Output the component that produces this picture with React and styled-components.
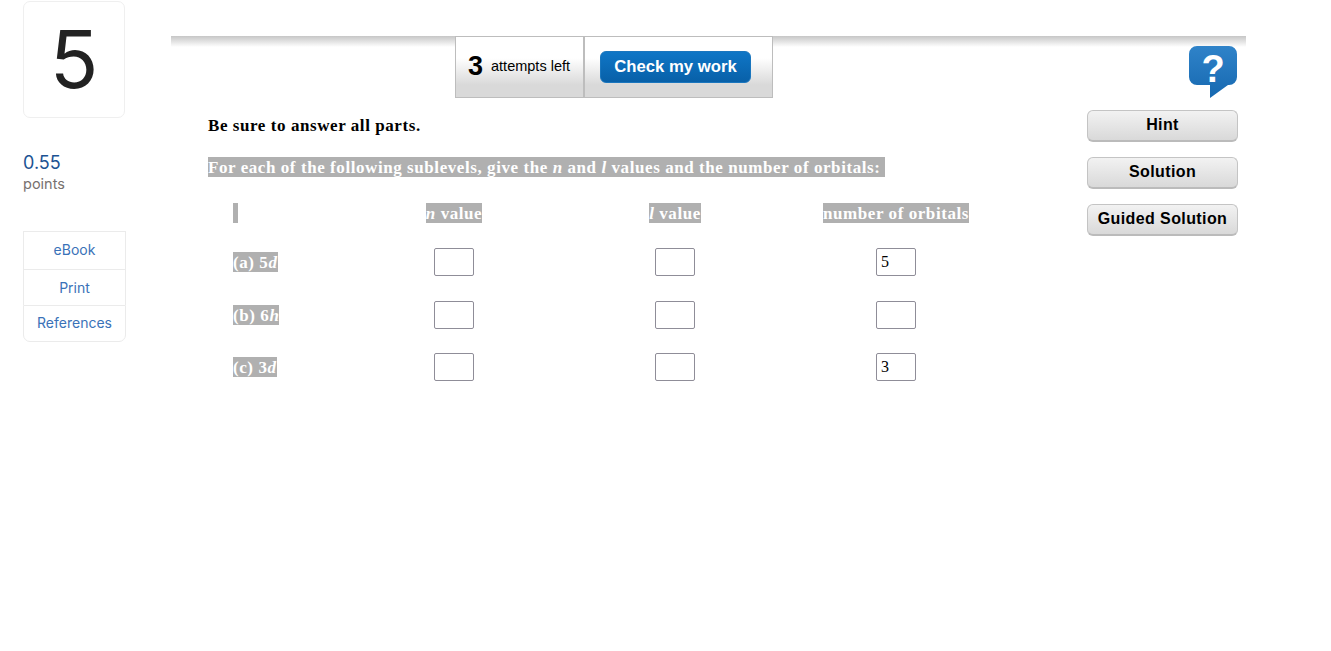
import React from "react";
import styled, { createGlobalStyle } from "styled-components";

const Global = createGlobalStyle`
  html, body { margin: 0; padding: 0; background: #fff; }
  * { box-sizing: border-box; }
`;

const Page = styled.div`
  display: flex;
  align-items: flex-start;
  width: 1331px;
  height: 651px;
  overflow: hidden;
  padding-left: 23px;
`;

const Sidebar = styled.aside`
  width: 103px;
  padding-top: 1px;
  font-family: Inter, "Liberation Sans", sans-serif;
`;

const NumberCard = styled.div`
  width: 102px;
  height: 117px;
  border: 1px solid #efefef;
  border-radius: 7px;
  display: flex;
  align-items: center;
  justify-content: center;
  padding-bottom: 1px;
  font-size: 80px;
  font-weight: 400;
  color: #222;
  line-height: 1;
`;

const Score = styled.div`
  margin-top: 35px;
  font-size: 18px;
  line-height: 20px;
  color: #1c5393;
`;

const ScoreLabel = styled.div`
  font-size: 14.5px;
  line-height: 20px;
  color: #77716f;
  margin-top: 1px;
`;

const Nav = styled.nav`
  margin-top: 37px;
  display: flex;
  flex-direction: column;
`;

const NavItem = styled.a`
  height: ${(p) => p.$h}px;
  padding-bottom: ${(p) => p.$lift || 0}px;
  display: flex;
  align-items: center;
  justify-content: center;
  border: 1px solid #ebebeb;
  border-bottom: ${(p) => (p.$last ? "1px solid #ebebeb" : "none")};
  border-radius: ${(p) => (p.$last ? "0 0 7px 7px" : "0")};
  font-size: 14px;
  color: #3a72b8;
`;

const Main = styled.main`
  width: 1075px;
  margin-left: 45px;
  padding-top: 36px;
`;

const TopBar = styled.header`
  display: flex;
  justify-content: flex-start;
  padding-left: 284px;
  background: linear-gradient(#c6c6c6, #fff) no-repeat top / 100% 11px;
`;

const Attempts = styled.div`
  display: flex;
  height: 62px;
  border: 1px solid #bdbdbd;
  background: linear-gradient(#fff 35%, #d9d9d9 80%);
  font-family: "Liberation Sans", Arial, sans-serif;
`;

const AttemptCell = styled.div`
  width: 129px;
  border-right: 2px solid #bdbdbd;
  display: flex;
  align-items: center;
  padding: 0 0 2px 12px;
  font-size: 14.5px;
  color: #000;
`;

const AttemptCount = styled.b`
  font-size: 27px;
  margin-right: 8px;
`;

const CheckCell = styled.div`
  width: 187px;
  display: flex;
  align-items: center;
  padding-left: 15px;
`;

const CheckButton = styled.button`
  width: 151px;
  height: 32px;
  padding: 0 0 1px;
  border: 1px solid #1a76be;
  border-radius: 6px;
  background: linear-gradient(#0f76c6, #0860a8);
  color: #fff;
  font: bold 16.7px "Liberation Sans", Arial, sans-serif;
`;

const Body = styled.div`
  display: flex;
  padding-left: 37px;
  margin-top: -52px;
`;

const Question = styled.section`
  width: 879px;
  padding-top: 70px;
  font-family: "Liberation Serif", "Times New Roman", serif;
  font-size: 17px;
  font-weight: bold;
  letter-spacing: 0.57px;
  line-height: 20px;
`;

const Intro = styled.p`
  margin: 0 0 21px;
  color: #000;
`;

const Mark = styled.span`
  background: #b0b0b0;
  color: #fff;
  display: block;
  width: max-content;
  line-height: 22px;
  height: 20px;
  overflow: hidden;
  white-space: nowrap;
  min-width: ${(p) => p.$min || 0}px;
`;

const Grid = styled.div`
  display: grid;
  grid-template-columns: 110.5px 221px 221px 221px;
  grid-template-rows: 45.5px repeat(3, 52.5px);
  margin: 13.25px 0 0 25px;
  align-items: center;
  justify-items: center;
`;

const Corner = styled.div`
  justify-self: start;
  display: flex;
`;

const Field = styled.input`
  width: 40px;
  height: 28px;
  padding: 0 0 0 4px;
  border: 1px solid #8f8d98;
  border-radius: 2px;
  background: #fff;
  font: 16px "Liberation Serif", "Times New Roman", serif;
  color: #000;
`;

const Side = styled.aside`
  width: 151px;
  display: flex;
  flex-direction: column;
  gap: 15px;
`;

const HelpIcon = styled.svg`
  align-self: flex-end;
  display: block;
  margin-right: 1px;
  margin-bottom: -3px;
`;

const SideButton = styled.button`
  width: 151px;
  height: 32px;
  padding: 0 0 2px;
  border: 1px solid #c4c4c4;
  border-bottom: 2px solid #bbb;
  border-radius: 6px;
  background: linear-gradient(#f2f2f2, #d9d9d9);
  color: #000;
  letter-spacing: 0.4px;
  font: bold 16px "Liberation Sans", Arial, sans-serif;
`;

const rows = [
  ["(a) 5", "d", "", "", "5"],
  ["(b) 6", "h", "", "", ""],
  ["(c) 3", "d", "", "", "3"],
];

export default function App() {
  return (
    <Page>
      <Global />
      <Sidebar>
        <NumberCard>5</NumberCard>
        <Score>0.55</Score>
        <ScoreLabel>points</ScoreLabel>
        <Nav>
          <NavItem $h={38} $lift={2}>eBook</NavItem>
          <NavItem $h={36}>Print</NavItem>
          <NavItem $h={37} $lift={2} $last>References</NavItem>
        </Nav>
      </Sidebar>
      <Main>
        <TopBar>
          <Attempts>
            <AttemptCell>
              <AttemptCount>3</AttemptCount> attempts left
            </AttemptCell>
            <CheckCell>
              <CheckButton>Check my work</CheckButton>
            </CheckCell>
          </Attempts>
        </TopBar>
        <Body>
          <Question>
            <Intro>Be sure to answer all parts.</Intro>
            <Mark>
              For each of the following sublevels, give the <i>n</i> and <i>l</i> values and the number of orbitals:&nbsp;
            </Mark>
            <Grid>
              <Corner><Mark $min={5} /></Corner>
              <Mark><i>n</i> value</Mark>
              <Mark><i>l</i> value</Mark>
              <Mark>number of orbitals</Mark>
              {rows.map((r) => (
                <React.Fragment key={r[0]}>
                  <Corner><Mark>{r[0]}<i>{r[1]}</i></Mark></Corner>
                  <Field defaultValue={r[2]} />
                  <Field defaultValue={r[3]} />
                  <Field defaultValue={r[4]} />
                </React.Fragment>
              ))}
            </Grid>
          </Question>
          <Side>
            <HelpIcon width="48" height="52" viewBox="0 0 48 52">
              <defs>
                <linearGradient id="helpBlue" x1="0" y1="0" x2="0" y2="1">
                  <stop offset="0" stopColor="#2f83c9" />
                  <stop offset="1" stopColor="#1668b0" />
                </linearGradient>
              </defs>
              <path d="M8 0H40A8 8 0 0 1 48 8V31A8 8 0 0 1 40 39H39L21 52L21 39H8A8 8 0 0 1 0 31V8A8 8 0 0 1 8 0Z" fill="url(#helpBlue)" />
              <text x="24" y="36" textAnchor="middle" fontFamily="Liberation Sans, Arial, sans-serif" fontWeight="bold" fontSize="38" fill="#fff">?</text>
            </HelpIcon>
            <SideButton>Hint</SideButton>
            <SideButton>Solution</SideButton>
            <SideButton>Guided Solution</SideButton>
          </Side>
        </Body>
      </Main>
    </Page>
  );
}
